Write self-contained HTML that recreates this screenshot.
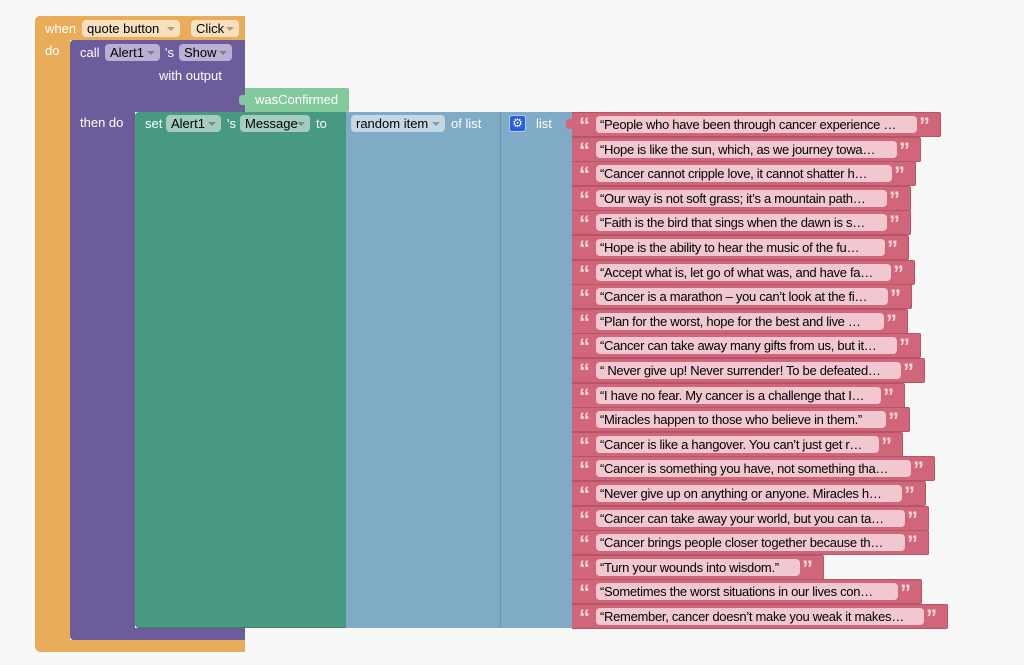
<!DOCTYPE html>
<html><head><meta charset="utf-8"><style>
body{margin:0;width:1024px;height:665px;background:#f8f8f8;position:relative;overflow:hidden;font-family:"Liberation Sans",sans-serif;font-size:13px;color:#fff}
div{position:absolute;box-sizing:border-box}
.t{white-space:nowrap;line-height:16px}
.dd{border-radius:4px;line-height:17px;height:17px;padding-left:5px;white-space:nowrap;color:#000}
.dd:after{content:"";position:absolute;right:5px;top:7px;border-left:4px solid transparent;border-right:4px solid transparent;border-top:4px solid rgba(0,0,0,.3)}
.r{left:572px;height:25px;background:#d1667a;border:1px solid #b55568;border-left:none;border-radius:0 2px 2px 0}
.r .q1,.r .q2{top:0px;font-family:"Liberation Sans",sans-serif;font-weight:bold;font-size:22px;color:#f6d3da;line-height:26px;letter-spacing:-1px}
.r .q1{left:7px}
.r .p{left:24px;top:3px;height:17px;background:#f2c8d0;border-radius:4px;color:#000;font-size:13px;line-height:17px;padding-left:4px;white-space:nowrap;overflow:hidden;letter-spacing:-.3px}
.nub{width:6px;height:10px;border-radius:3px 0 0 3px}
</style></head><body>
<div style="left:35px;top:16px;width:210px;height:24px;background:#e9ad5a;border-radius:5px 0 0 0"></div>
<div style="left:35px;top:16px;width:35px;height:636px;background:#e9ad5a;border-radius:5px 0 0 6px"></div>
<div style="left:35px;top:640px;width:210px;height:12px;background:#e9ad5a;border-radius:0 0 0 6px"></div>
<div class="t" style="left:45px;top:21px">when</div>
<div class="dd" style="left:82px;top:20px;width:98px;background:#f8dfbd">quote button</div>
<div class="dd" style="left:191px;top:20px;width:48px;background:#f8dfbd">Click</div>
<div class="t" style="left:45px;top:43px">do</div>
<div style="left:70px;top:40px;width:175px;height:72px;background:#6d5c9c;border-radius:4px 0 0 0"></div>
<div style="left:70px;top:40px;width:65px;height:600px;background:#6d5c9c;border-radius:4px 0 0 4px"></div>
<div style="left:70px;top:628px;width:175px;height:12px;background:#6d5c9c;border-radius:0 0 0 4px"></div>
<div class="t" style="left:80px;top:45px">call</div>
<div class="dd" style="left:105px;top:44px;width:55px;background:#b9b0d3">Alert1</div>
<div class="t" style="left:165px;top:45px">'s</div>
<div class="dd" style="left:179px;top:44px;width:53px;background:#b9b0d3">Show</div>
<div class="t" style="left:159px;top:68px">with output</div>
<div style="left:245px;top:88px;width:104px;height:24px;background:#83c99c;border-radius:0 2px 2px 0"></div>
<div class="nub" style="left:239px;top:95px;background:#83c99c"></div>
<div class="t" style="left:255px;top:92px">wasConfirmed</div>
<div class="t" style="left:80px;top:115px">then do</div>
<div style="left:135px;top:112px;width:211px;height:516px;background:#479a81;border-radius:4px 0 0 4px;border-bottom:1px solid #3a826c"></div>
<div class="t" style="left:145px;top:116px">set</div>
<div class="dd" style="left:166px;top:115px;width:55px;background:#a4cdc0">Alert1</div>
<div class="t" style="left:227px;top:116px">'s</div>
<div class="dd" style="left:240px;top:115px;width:70px;background:#a4cdc0">Message</div>
<div class="t" style="left:316px;top:116px">to</div>
<div style="left:346px;top:112px;width:155px;height:516px;background:#80abc6;border-right:1px solid #6d95ad"></div>
<div class="dd" style="left:351px;top:115px;width:94px;background:#c3d7e5">random item</div>
<div class="t" style="left:451px;top:116px">of list</div>
<div style="left:501px;top:112px;width:72px;height:516px;background:#80abc6"></div>
<div style="left:509px;top:115px;width:17px;height:17px;background:#2560e0;border-radius:3px;border:1px solid #b8c8f0;color:#fff;font-size:12px;line-height:15px;text-align:center">⚙</div>
<div class="t" style="left:536px;top:116px">list</div>

<div class="r" style="top:112px;width:369px"><div class="q1">“</div><div class="p" style="width:321px">“People who have been through cancer experience …</div><div class="q2" style="left:347px">”</div></div>
<div class="r" style="top:137px;width:349px"><div class="q1">“</div><div class="p" style="width:301px">“Hope is like the sun, which, as we journey towa…</div><div class="q2" style="left:327px">”</div></div>
<div class="r" style="top:161px;width:344px"><div class="q1">“</div><div class="p" style="width:296px">“Cancer cannot cripple love, it cannot shatter h…</div><div class="q2" style="left:322px">”</div></div>
<div class="r" style="top:186px;width:339px"><div class="q1">“</div><div class="p" style="width:291px">“Our way is not soft grass; it’s a mountain path…</div><div class="q2" style="left:317px">”</div></div>
<div class="r" style="top:210px;width:339px"><div class="q1">“</div><div class="p" style="width:291px">“Faith is the bird that sings when the dawn is s…</div><div class="q2" style="left:317px">”</div></div>
<div class="r" style="top:235px;width:337px"><div class="q1">“</div><div class="p" style="width:289px">“Hope is the ability to hear the music of the fu…</div><div class="q2" style="left:315px">”</div></div>
<div class="r" style="top:260px;width:343px"><div class="q1">“</div><div class="p" style="width:295px">“Accept what is, let go of what was, and have fa…</div><div class="q2" style="left:321px">”</div></div>
<div class="r" style="top:284px;width:340px"><div class="q1">“</div><div class="p" style="width:292px">“Cancer is a marathon – you can’t look at the fi…</div><div class="q2" style="left:318px">”</div></div>
<div class="r" style="top:309px;width:336px"><div class="q1">“</div><div class="p" style="width:288px">“Plan for the worst, hope for the best and live …</div><div class="q2" style="left:314px">”</div></div>
<div class="r" style="top:333px;width:349px"><div class="q1">“</div><div class="p" style="width:301px">“Cancer can take away many gifts from us, but it…</div><div class="q2" style="left:327px">”</div></div>
<div class="r" style="top:358px;width:353px"><div class="q1">“</div><div class="p" style="width:305px">“ Never give up! Never surrender! To be defeated…</div><div class="q2" style="left:331px">”</div></div>
<div class="r" style="top:383px;width:333px"><div class="q1">“</div><div class="p" style="width:285px">“I have no fear. My cancer is a challenge that I…</div><div class="q2" style="left:311px">”</div></div>
<div class="r" style="top:407px;width:338px"><div class="q1">“</div><div class="p" style="width:290px">“Miracles happen to those who believe in them.”</div><div class="q2" style="left:316px">”</div></div>
<div class="r" style="top:432px;width:331px"><div class="q1">“</div><div class="p" style="width:283px">“Cancer is like a hangover. You can’t just get r…</div><div class="q2" style="left:309px">”</div></div>
<div class="r" style="top:456px;width:363px"><div class="q1">“</div><div class="p" style="width:315px">“Cancer is something you have, not something tha…</div><div class="q2" style="left:341px">”</div></div>
<div class="r" style="top:481px;width:354px"><div class="q1">“</div><div class="p" style="width:306px">“Never give up on anything or anyone. Miracles h…</div><div class="q2" style="left:332px">”</div></div>
<div class="r" style="top:506px;width:357px"><div class="q1">“</div><div class="p" style="width:309px">“Cancer can take away your world, but you can ta…</div><div class="q2" style="left:335px">”</div></div>
<div class="r" style="top:530px;width:357px"><div class="q1">“</div><div class="p" style="width:309px">“Cancer brings people closer together because th…</div><div class="q2" style="left:335px">”</div></div>
<div class="r" style="top:555px;width:252px"><div class="q1">“</div><div class="p" style="width:204px">“Turn your wounds into wisdom.”</div><div class="q2" style="left:230px">”</div></div>
<div class="r" style="top:579px;width:350px"><div class="q1">“</div><div class="p" style="width:302px">“Sometimes the worst situations in our lives con…</div><div class="q2" style="left:328px">”</div></div>
<div class="r" style="top:604px;width:376px"><div class="q1">“</div><div class="p" style="width:328px">“Remember, cancer doesn’t make you weak it makes…</div><div class="q2" style="left:354px">”</div></div>
<div class="nub" style="left:566px;top:119px;background:#d1667a"></div>
</body></html>
